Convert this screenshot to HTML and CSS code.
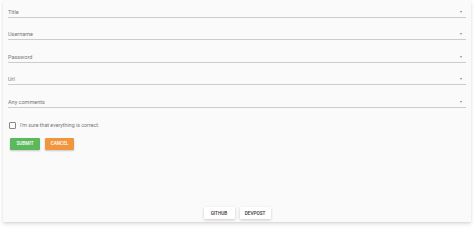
FILE: index.html
```html
<!DOCTYPE html>
<html lang="en">
<head>
    <meta charset="UTF-8">
    <title>Form</title>
    <link rel="stylesheet" href="styles.css">
</head>
<body>
    <div class="paper">
        <form class="form">
            <div class="field"><span class="label">Title</span><span class="arrow"></span></div>
            <div class="field"><span class="label">Username</span><span class="arrow"></span></div>
            <div class="field"><span class="label">Password</span><span class="arrow"></span></div>
            <div class="field"><span class="label">Url</span><span class="arrow"></span></div>
            <div class="field"><span class="label">Any comments</span><span class="arrow"></span></div>

            <label class="check">
                <span class="box"></span>
                <span class="check-text">I'm sure that everything is correct.</span>
            </label>

            <div class="actions">
                <button type="button" class="btn btn-submit">SUBMIT</button>
                <button type="button" class="btn btn-cancel">CANCEL</button>
            </div>
        </form>

        <div class="links">
            <button type="button" class="link-btn">GITHUB</button>
            <button type="button" class="link-btn">DEVPOST</button>
        </div>
    </div>
</body>
</html>
```

FILE: styles.css
```css
* {
    margin: 0;
    padding: 0;
    box-sizing: border-box;
    font-family: Roboto, "Liberation Sans", sans-serif;
}

body {
    background-color: #ffffff;
    width: 474px;
    height: 229px;
}

.paper {
    margin: 0 3px;
    height: 222px;
    background-color: #fafafa;
    box-shadow: 0 2px 4px rgba(0, 0, 0, 0.12), 0 1px 2px rgba(0, 0, 0, 0.06);
    padding: 0 5px;
    display: flex;
    flex-direction: column;
}

.form {
    display: flex;
    flex-direction: column;
}

.field {
    display: flex;
    align-items: flex-end;
    justify-content: space-between;
    height: 22.6px;
    padding: 0 0 2px 0;
    border-bottom: 1px solid #cccccc;
    color: #777;
}

.field:first-child {
    height: 17.5px;
}

.label {
    font-size: 5.5px;
    line-height: 6px;
}

.arrow {
    width: 0;
    height: 0;
    margin-right: 4px;
    margin-bottom: 2px;
    border-left: 1.5px solid transparent;
    border-right: 1.5px solid transparent;
    border-top: 2px solid #888;
}

.check {
    display: flex;
    align-items: center;
    margin-top: 14px;
    padding-left: 1px;
}

.box {
    width: 7px;
    height: 7px;
    border: 1px solid #888;
    border-radius: 1px;
}

.check-text {
    margin-left: 4px;
    font-size: 5.3px;
    color: #777;
}

.actions {
    display: flex;
    gap: 5px;
    margin-top: 9px;
    padding-left: 2px;
}

.btn {
    height: 12px;
    padding: 0;
    border: none;
    border-radius: 1px;
    color: #fff;
    font-size: 4.7px;
    font-weight: 500;
    box-shadow: 0 1px 2px rgba(0, 0, 0, 0.2);
}

.btn-submit {
    width: 30px;
    background-color: #5cb85c;
}

.btn-cancel {
    width: 29px;
    background-color: #f0963e;
}

.links {
    margin-top: auto;
    margin-bottom: 3px;
    display: flex;
    justify-content: center;
    gap: 5px;
}

.link-btn {
    width: 31px;
    height: 12px;
    padding: 0;
    border: none;
    border-radius: 1px;
    background-color: #ffffff;
    color: #333;
    font-size: 4.7px;
    font-weight: 500;
    box-shadow: 0 1px 3px rgba(0, 0, 0, 0.2);
}
```
